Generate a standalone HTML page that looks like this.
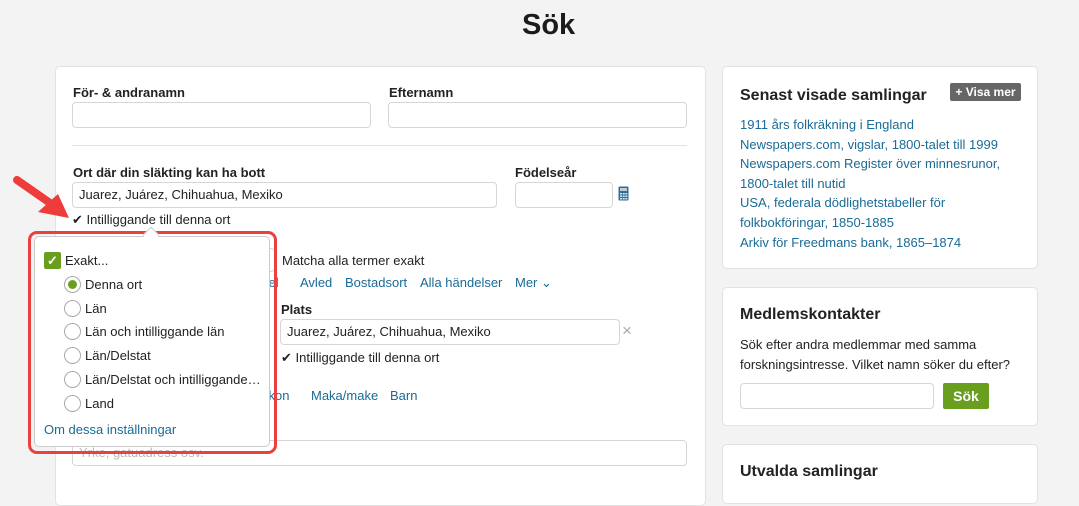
<!DOCTYPE html>
<html><head><meta charset="utf-8"><style>
*{box-sizing:border-box;margin:0;padding:0}
body{width:1079px;height:483px;overflow:hidden;background:#f3f3f3;font-family:"Liberation Sans",sans-serif;font-size:13px;color:#222;position:relative}
.a{position:absolute;white-space:nowrap}
.card{position:absolute;background:#fff;border:1px solid #e2e2e2;border-radius:5px}
.inp{position:absolute;background:#fff;border:1px solid #d6d6d6;border-radius:4px}
.lbl{position:absolute;font-weight:bold;font-size:13px;white-space:nowrap}
.lnk{color:#1a6b95}
.rad{position:absolute;width:17px;height:17px;border:1px solid #aaa;border-radius:50%;background:#fff}
</style></head><body>
<div class="a" style="left:522px;top:9px;font-size:29px;font-weight:bold;color:#1b1b1b">Sök</div>

<div class="card" style="left:55px;top:66px;width:651px;height:440px"></div>
<div class="lbl" style="left:73px;top:85px">För- &amp; andranamn</div>
<div class="inp" style="left:72px;top:102px;width:299px;height:26px"></div>
<div class="lbl" style="left:389px;top:85px">Efternamn</div>
<div class="inp" style="left:388px;top:102px;width:299px;height:26px"></div>
<div class="a" style="left:72px;top:145px;width:615px;height:1px;background:#e2e2e2"></div>

<div class="lbl" style="left:73px;top:165px">Ort där din släkting kan ha bott</div>
<div class="inp" style="left:72px;top:182px;width:425px;height:26px"></div>
<div class="a" style="left:79px;top:187px;font-size:13px">Juarez, Juárez, Chihuahua, Mexiko</div>
<div class="lbl" style="left:515px;top:165px">Födelseår</div>
<div class="inp" style="left:515px;top:182px;width:98px;height:26px"></div>
<svg class="a" style="left:618px;top:186px" width="11" height="15"><rect x="0.5" y="0.5" width="10" height="14" rx="1" fill="#2e6f95"/><rect x="2" y="2" width="7" height="3" fill="#bcd"/><g fill="#dde"><rect x="2" y="7" width="2" height="1.5"/><rect x="4.7" y="7" width="2" height="1.5"/><rect x="7.3" y="7" width="2" height="1.5"/><rect x="2" y="9.5" width="2" height="1.5"/><rect x="4.7" y="9.5" width="2" height="1.5"/><rect x="7.3" y="9.5" width="2" height="1.5"/><rect x="2" y="12" width="2" height="1.5"/><rect x="4.7" y="12" width="2" height="1.5"/><rect x="7.3" y="12" width="2" height="1.5"/></g></svg>
<div class="a" style="left:72px;top:212px">✔ Intilliggande till denna ort</div>

<div class="inp" style="left:200px;top:248px;width:75px;height:24px"></div>
<div class="a" style="left:282px;top:253px">Matcha alla termer exakt</div>
<div class="a lnk" style="left:262px;top:275px">sel</div>
<div class="a lnk" style="left:300px;top:275px">Avled</div>
<div class="a lnk" style="left:345px;top:275px">Bostadsort</div>
<div class="a lnk" style="left:420px;top:275px">Alla händelser</div>
<div class="a lnk" style="left:515px;top:275px">Mer ⌄</div>
<div class="lbl" style="left:281px;top:302px">Plats</div>
<div class="inp" style="left:280px;top:319px;width:340px;height:26px"></div>
<div class="a" style="left:287px;top:324px">Juarez, Juárez, Chihuahua, Mexiko</div>
<div class="a" style="left:622px;top:321px;color:#aaa;font-size:17px">×</div>
<div class="a" style="left:281px;top:350px">✔ Intilliggande till denna ort</div>
<div class="a lnk" style="left:262px;top:388px">skon</div>
<div class="a lnk" style="left:311px;top:388px">Maka/make</div>
<div class="a lnk" style="left:390px;top:388px">Barn</div>
<div class="inp" style="left:72px;top:440px;width:615px;height:26px"></div>
<div class="a" style="left:79px;top:445px;color:#bbb">Yrke, gatuadress osv.</div>

<!-- popup -->
<div class="a" style="left:28px;top:231px;width:249px;height:223px;border:3px solid #e8413f;border-radius:9px"></div>
<div class="a" style="left:34px;top:236px;width:236px;height:211px;background:#fff;border:1px solid #ccc;border-radius:5px"></div>
<div class="a" style="left:145px;top:229px;width:12px;height:12px;background:#fff;border-left:1px solid #ccc;border-top:1px solid #ccc;transform:rotate(45deg)"></div>
<div class="a" style="left:44px;top:252px;width:17px;height:17px;background:#6a9e1f;border-radius:2px;color:#fff;font-size:13px;text-align:center;line-height:17px;font-weight:bold">✓</div>
<div class="a" style="left:65px;top:253px">Exakt...</div>
<div class="rad" style="left:64px;top:276px"><div style="position:absolute;left:3px;top:3px;width:9px;height:9px;border-radius:50%;background:#6a9e1f"></div></div>
<div class="a" style="left:85px;top:277px">Denna ort</div>
<div class="rad" style="left:64px;top:300px"></div><div class="a" style="left:85px;top:301px">Län</div>
<div class="rad" style="left:64px;top:323px"></div><div class="a" style="left:85px;top:324px">Län och intilliggande län</div>
<div class="rad" style="left:64px;top:347px"></div><div class="a" style="left:85px;top:348px">Län/Delstat</div>
<div class="rad" style="left:64px;top:371px"></div><div class="a" style="left:85px;top:372px;width:176px;overflow:hidden;text-overflow:ellipsis">Län/Delstat och intilliggande län</div>
<div class="rad" style="left:64px;top:395px"></div><div class="a" style="left:85px;top:396px">Land</div>
<div class="a lnk" style="left:44px;top:422px">Om dessa inställningar</div>

<svg class="a" style="left:0;top:165px" width="80" height="60"><line x1="17" y1="15" x2="50" y2="38" stroke="#ee3b3b" stroke-width="8" stroke-linecap="round"/><polygon points="69,53 38,47 58,29" fill="#ee3b3b"/></svg>

<!-- right -->
<div class="card" style="left:722px;top:66px;width:316px;height:203px"></div>
<div class="a" style="left:740px;top:87px;font-size:16px;font-weight:bold">Senast visade samlingar</div>
<div class="a" style="left:950px;top:83px;width:71px;height:18px;background:#666;border-radius:2px;color:#fff;font-weight:bold;font-size:12px;text-align:center;line-height:18px">+ Visa mer</div>
<div class="a lnk" style="left:740px;top:115px;line-height:19.6px">1911 års folkräkning i England<br>Newspapers.com, vigslar, 1800-talet till 1999<br>Newspapers.com Register över minnesrunor,<br>1800-talet till nutid<br>USA, federala dödlighetstabeller för<br>folkbokföringar, 1850-1885<br>Arkiv för Freedmans bank, 1865–1874</div>

<div class="card" style="left:722px;top:287px;width:316px;height:139px"></div>
<div class="a" style="left:740px;top:306px;font-size:16px;font-weight:bold">Medlemskontakter</div>
<div class="a" style="left:740px;top:335px;line-height:19.6px">Sök efter andra medlemmar med samma<br>forskningsintresse. Vilket namn söker du efter?</div>
<div class="inp" style="left:740px;top:383px;width:194px;height:26px"></div>
<div class="a" style="left:943px;top:383px;width:46px;height:26px;background:#6a9e1f;border-radius:2px;color:#fff;font-weight:bold;font-size:14px;text-align:center;line-height:26px">Sök</div>

<div class="card" style="left:722px;top:444px;width:316px;height:60px"></div>
<div class="a" style="left:740px;top:463px;font-size:16px;font-weight:bold">Utvalda samlingar</div>
</body></html>
